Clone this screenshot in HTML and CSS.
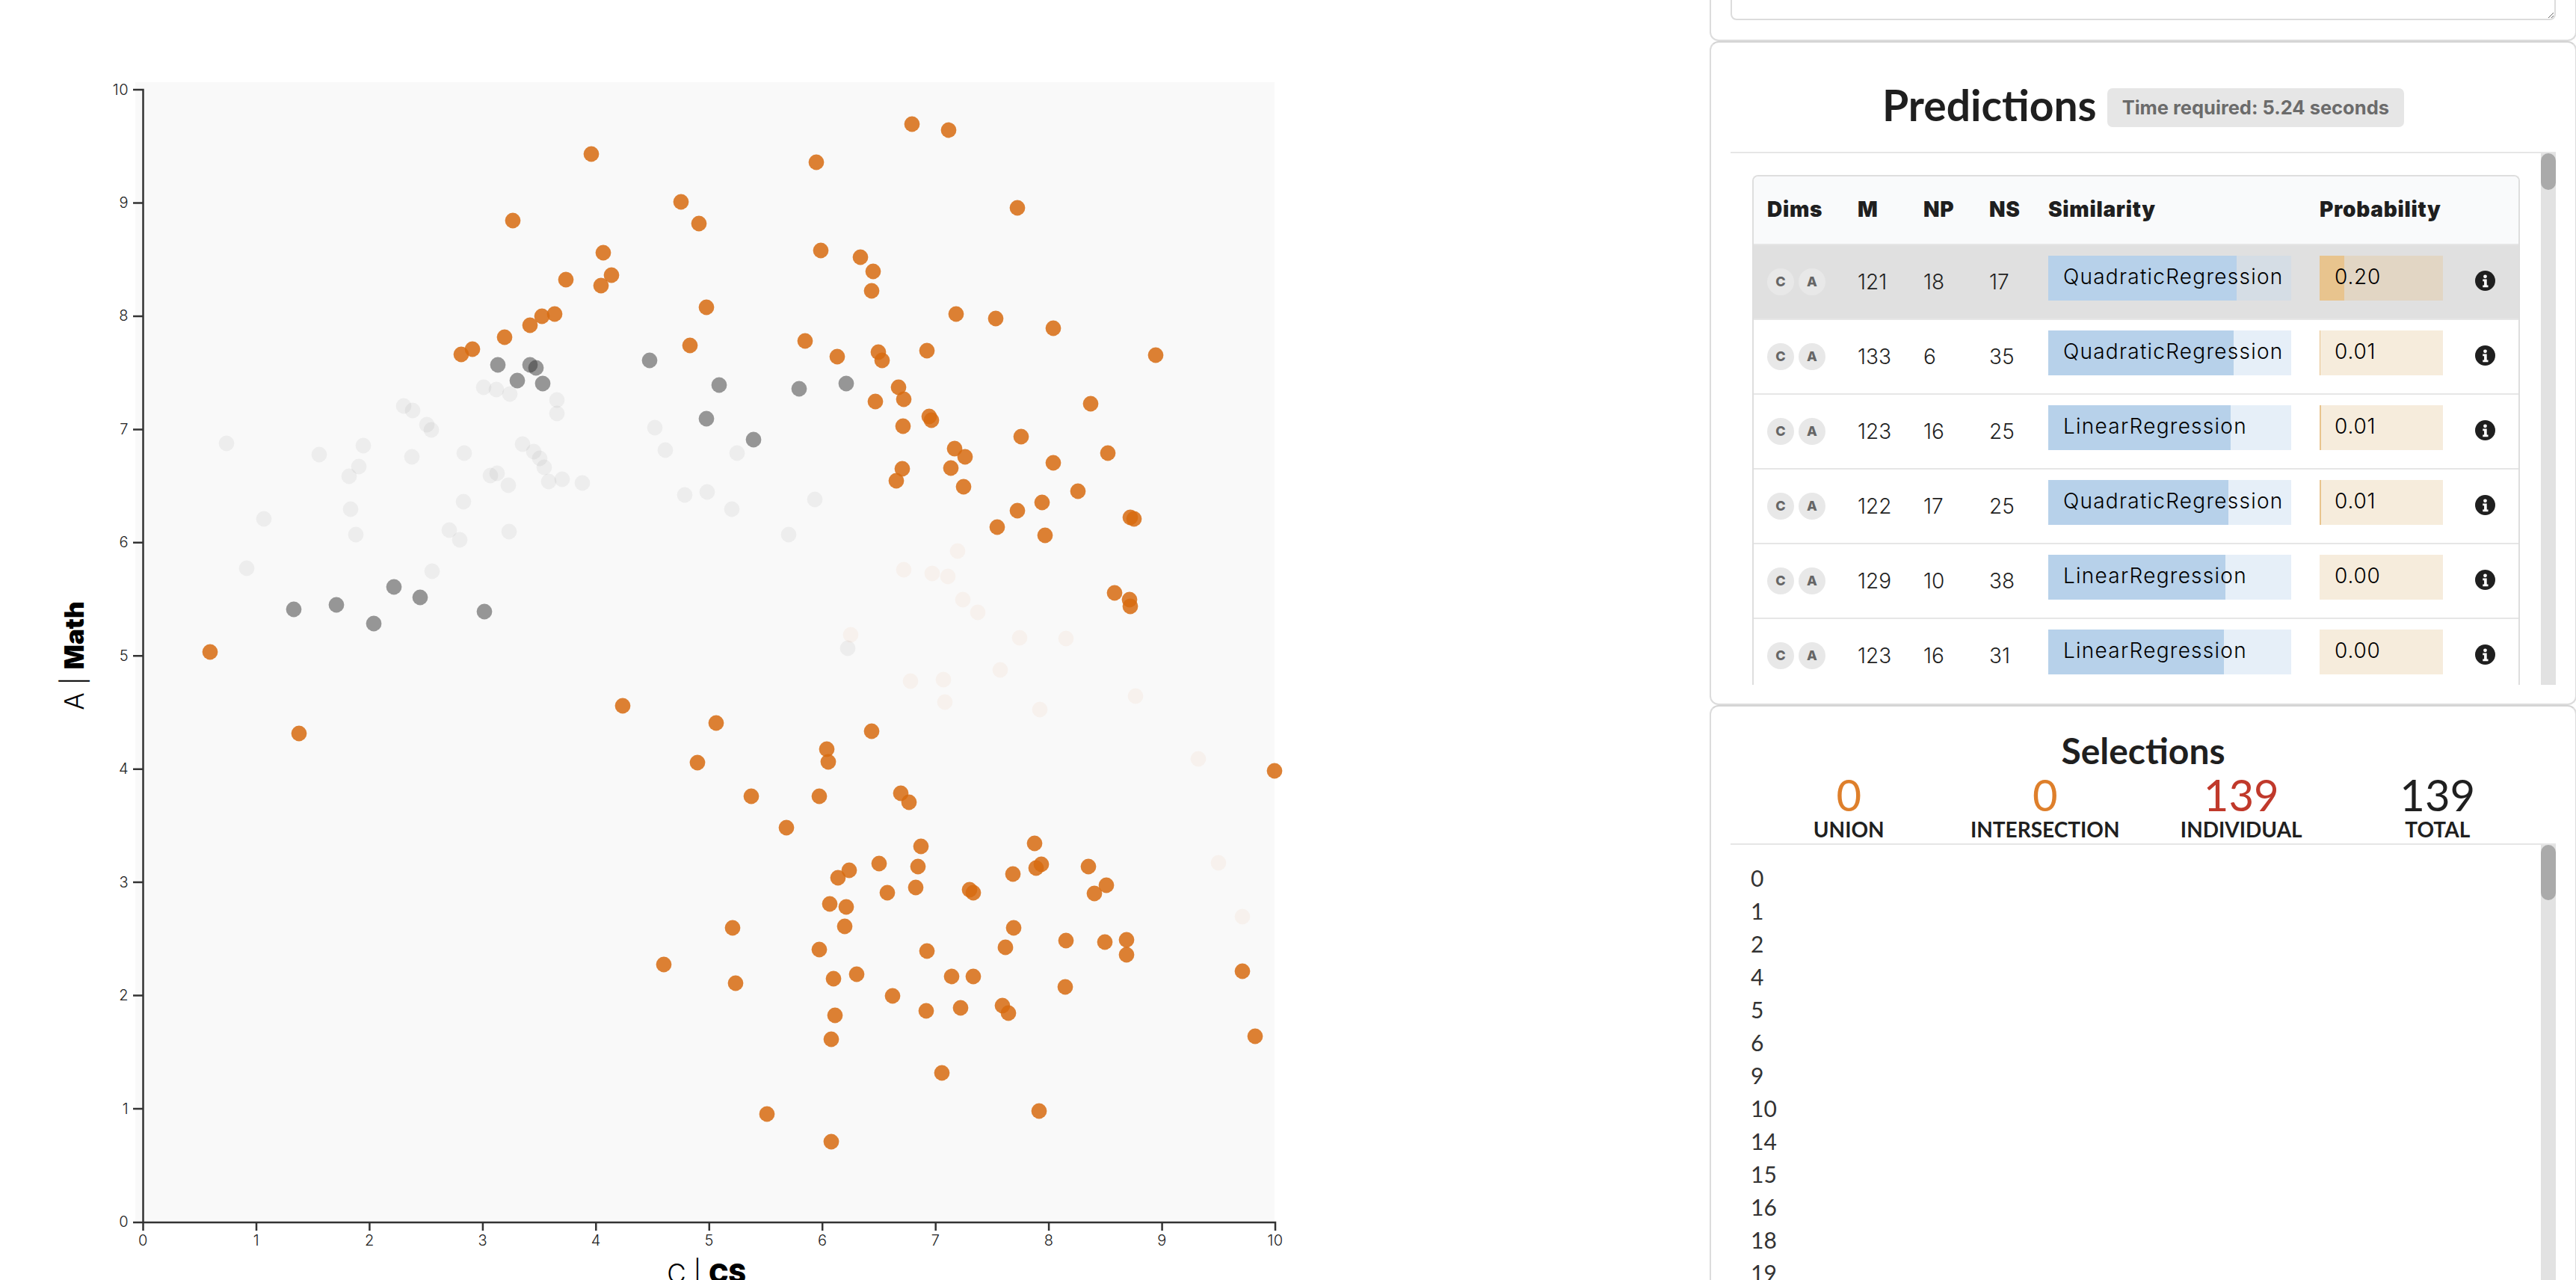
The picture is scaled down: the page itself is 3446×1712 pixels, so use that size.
FILE: index.html
```html
<html>
  <head>
    <link rel="stylesheet" href="styles.css">
  </head>
  <body>
    <svg width="0" height="0" class="defs">
      <symbol id="info" viewBox="0 0 27 27">
        <circle cx="13.5" cy="13.5" r="13.5" fill="#1f1f1f"></circle>
        <circle cx="13.5" cy="7.8" r="2.4" fill="#fff"></circle>
        <path d="M10.3 11.6h5.4v8h1.8v2.6h-7.2v-2.6h1.8v-5.4h-1.8z" fill="#fff"></path>
      </symbol>
    </svg>

    <div class="app">
      <div class="chart">
        <svg class="plot" width="2287" height="1712">
          <rect class="plot-bg" x="181" y="110" width="1524" height="1525"></rect>

          <!-- not in the selection -->
          <g class="dots dots-faint">
            <circle cx="303" cy="593"></circle><circle cx="427" cy="608"></circle><circle cx="486" cy="596"></circle>
            <circle cx="480" cy="624"></circle><circle cx="467" cy="637"></circle><circle cx="469" cy="681"></circle>
            <circle cx="476" cy="715"></circle><circle cx="353" cy="694"></circle><circle cx="330" cy="760"></circle>
            <circle cx="540" cy="543"></circle><circle cx="552" cy="549"></circle><circle cx="571" cy="568"></circle>
            <circle cx="577" cy="575"></circle><circle cx="551" cy="611"></circle><circle cx="621" cy="606"></circle>
            <circle cx="647" cy="518"></circle><circle cx="664" cy="521"></circle><circle cx="682" cy="527"></circle>
            <circle cx="745" cy="535"></circle><circle cx="745" cy="553"></circle><circle cx="699" cy="594"></circle>
            <circle cx="714" cy="604"></circle><circle cx="722" cy="613"></circle><circle cx="728" cy="625"></circle>
            <circle cx="734" cy="644"></circle><circle cx="752" cy="641"></circle><circle cx="779" cy="646"></circle>
            <circle cx="656" cy="636"></circle><circle cx="665" cy="633"></circle><circle cx="680" cy="649"></circle>
            <circle cx="620" cy="671"></circle><circle cx="601" cy="709"></circle><circle cx="615" cy="722"></circle>
            <circle cx="681" cy="711"></circle><circle cx="578" cy="764"></circle><circle cx="876" cy="572"></circle>
            <circle cx="890" cy="602"></circle><circle cx="916" cy="662"></circle><circle cx="946" cy="658"></circle>
            <circle cx="986" cy="606"></circle><circle cx="979" cy="681"></circle><circle cx="1090" cy="668"></circle>
            <circle cx="1055" cy="715"></circle><circle cx="1134" cy="867"></circle>
          </g>
          <g class="dots dots-tint">
            <circle cx="1281" cy="737"></circle><circle cx="1209" cy="762"></circle><circle cx="1247" cy="767"></circle>
            <circle cx="1268" cy="771"></circle><circle cx="1288" cy="802"></circle><circle cx="1308" cy="819"></circle>
            <circle cx="1138" cy="849"></circle><circle cx="1364" cy="853"></circle><circle cx="1426" cy="854"></circle>
            <circle cx="1218" cy="911"></circle><circle cx="1262" cy="909"></circle><circle cx="1264" cy="939"></circle>
            <circle cx="1338" cy="896"></circle><circle cx="1391" cy="949"></circle><circle cx="1519" cy="931"></circle>
            <circle cx="1603" cy="1015"></circle><circle cx="1630" cy="1154"></circle><circle cx="1662" cy="1226"></circle>
          </g>
          <g class="dots dots-gray">
            <circle cx="666" cy="488"></circle><circle cx="709" cy="488"></circle><circle cx="717" cy="492"></circle>
            <circle cx="692" cy="509"></circle><circle cx="726" cy="513"></circle><circle cx="869" cy="482"></circle>
            <circle cx="962" cy="515"></circle><circle cx="945" cy="560"></circle><circle cx="393" cy="815"></circle>
            <circle cx="450" cy="809"></circle><circle cx="527" cy="785"></circle><circle cx="562" cy="799"></circle>
            <circle cx="500" cy="834"></circle><circle cx="648" cy="818"></circle><circle cx="1069" cy="520"></circle>
            <circle cx="1132" cy="513"></circle><circle cx="1008" cy="588"></circle>
          </g>
          <g class="dots dots-orange">
            <circle cx="791" cy="206"></circle><circle cx="686" cy="295"></circle><circle cx="807" cy="338"></circle>
            <circle cx="818" cy="368"></circle><circle cx="804" cy="382"></circle><circle cx="757" cy="374"></circle>
            <circle cx="742" cy="420"></circle><circle cx="725" cy="423"></circle><circle cx="709" cy="435"></circle>
            <circle cx="675" cy="451"></circle><circle cx="632" cy="467"></circle><circle cx="617" cy="474"></circle>
            <circle cx="911" cy="270"></circle><circle cx="935" cy="299"></circle><circle cx="945" cy="411"></circle>
            <circle cx="923" cy="462"></circle><circle cx="1220" cy="166"></circle><circle cx="1269" cy="174"></circle>
            <circle cx="1092" cy="217"></circle><circle cx="1361" cy="278"></circle><circle cx="1098" cy="335"></circle>
            <circle cx="1151" cy="344"></circle><circle cx="1168" cy="363"></circle><circle cx="1166" cy="389"></circle>
            <circle cx="1279" cy="420"></circle><circle cx="1332" cy="426"></circle><circle cx="1409" cy="439"></circle>
            <circle cx="1077" cy="456"></circle><circle cx="1120" cy="477"></circle><circle cx="1175" cy="471"></circle>
            <circle cx="1180" cy="482"></circle><circle cx="1240" cy="469"></circle><circle cx="1546" cy="475"></circle>
            <circle cx="1202" cy="518"></circle><circle cx="1209" cy="534"></circle><circle cx="1171" cy="537"></circle>
            <circle cx="1459" cy="540"></circle><circle cx="1243" cy="557"></circle><circle cx="1246" cy="562"></circle>
            <circle cx="1208" cy="570"></circle><circle cx="1366" cy="584"></circle><circle cx="1277" cy="600"></circle>
            <circle cx="1291" cy="611"></circle><circle cx="1272" cy="626"></circle><circle cx="1207" cy="627"></circle>
            <circle cx="1199" cy="643"></circle><circle cx="1289" cy="651"></circle><circle cx="1409" cy="619"></circle>
            <circle cx="1482" cy="606"></circle><circle cx="1442" cy="657"></circle><circle cx="1394" cy="672"></circle>
            <circle cx="1361" cy="683"></circle><circle cx="1334" cy="705"></circle><circle cx="1398" cy="716"></circle>
            <circle cx="1512" cy="692"></circle><circle cx="1517" cy="694"></circle><circle cx="1491" cy="793"></circle>
            <circle cx="1511" cy="802"></circle><circle cx="1512" cy="811"></circle><circle cx="281" cy="872"></circle>
            <circle cx="400" cy="981"></circle><circle cx="833" cy="944"></circle><circle cx="933" cy="1020"></circle>
            <circle cx="888" cy="1290"></circle><circle cx="958" cy="967"></circle><circle cx="1166" cy="978"></circle>
            <circle cx="1106" cy="1002"></circle><circle cx="1108" cy="1019"></circle><circle cx="1005" cy="1065"></circle>
            <circle cx="1096" cy="1065"></circle><circle cx="1205" cy="1061"></circle><circle cx="1216" cy="1073"></circle>
            <circle cx="1052" cy="1107"></circle><circle cx="1232" cy="1132"></circle><circle cx="1384" cy="1128"></circle>
            <circle cx="1176" cy="1155"></circle><circle cx="1228" cy="1159"></circle><circle cx="1136" cy="1164"></circle>
            <circle cx="1121" cy="1174"></circle><circle cx="1393" cy="1156"></circle><circle cx="1386" cy="1161"></circle>
            <circle cx="1355" cy="1169"></circle><circle cx="1456" cy="1159"></circle><circle cx="1480" cy="1184"></circle>
            <circle cx="1464" cy="1195"></circle><circle cx="1225" cy="1187"></circle><circle cx="1187" cy="1194"></circle>
            <circle cx="1297" cy="1190"></circle><circle cx="1302" cy="1194"></circle><circle cx="1110" cy="1209"></circle>
            <circle cx="1132" cy="1213"></circle><circle cx="1130" cy="1239"></circle><circle cx="980" cy="1241"></circle>
            <circle cx="1356" cy="1241"></circle><circle cx="1096" cy="1270"></circle><circle cx="1240" cy="1272"></circle>
            <circle cx="1345" cy="1267"></circle><circle cx="1426" cy="1258"></circle><circle cx="1478" cy="1260"></circle>
            <circle cx="1507" cy="1257"></circle><circle cx="1507" cy="1277"></circle><circle cx="1146" cy="1303"></circle>
            <circle cx="1115" cy="1309"></circle><circle cx="984" cy="1315"></circle><circle cx="1273" cy="1306"></circle>
            <circle cx="1302" cy="1306"></circle><circle cx="1425" cy="1320"></circle><circle cx="1662" cy="1299"></circle>
            <circle cx="1194" cy="1332"></circle><circle cx="1239" cy="1352"></circle><circle cx="1285" cy="1348"></circle>
            <circle cx="1341" cy="1345"></circle><circle cx="1349" cy="1355"></circle><circle cx="1117" cy="1358"></circle>
            <circle cx="1112" cy="1390"></circle><circle cx="1679" cy="1386"></circle><circle cx="1260" cy="1435"></circle>
            <circle cx="1026" cy="1490"></circle><circle cx="1390" cy="1486"></circle><circle cx="1112" cy="1527"></circle>
            <circle cx="1705" cy="1031"></circle>
          </g>

          <!-- axes -->
          <path class="axis" d="M178 120H191.5V1635M178 1635H1706V1646M191.5 1635V1646"></path>
          <path class="tick" d="M178 1483h13M178 1331.6h13M178 1180.1h13M178 1028.7h13M178 877.3h13M178 725.8h13M178 574.4h13M178 422.9h13M178 271.4h13"></path>
          <path class="tick" d="M343 1635v11M494.4 1635v11M645.9 1635v11M797.3 1635v11M948.8 1635v11M1100.2 1635v11M1251.7 1635v11M1403.1 1635v11M1554.6 1635v11"></path>

          <g class="tick-labels tick-labels-y">
            <text x="172" y="1641">0</text><text x="172" y="1490">1</text><text x="172" y="1338">2</text>
            <text x="172" y="1187">3</text><text x="172" y="1035">4</text><text x="172" y="884">5</text>
            <text x="172" y="732">6</text><text x="172" y="581">7</text><text x="172" y="429">8</text>
            <text x="172" y="278">9</text><text x="172" y="127">10</text>
          </g>
          <g class="tick-labels tick-labels-x">
            <text x="191.5" y="1666">0</text><text x="343" y="1666">1</text><text x="494.4" y="1666">2</text>
            <text x="645.9" y="1666">3</text><text x="797.3" y="1666">4</text><text x="948.8" y="1666">5</text>
            <text x="1100.2" y="1666">6</text><text x="1251.7" y="1666">7</text><text x="1403.1" y="1666">8</text>
            <text x="1554.6" y="1666">9</text><text x="1706" y="1666">10</text>
          </g>

          <text class="axis-title" x="945" y="1716">C | <tspan class="axis-name">CS</tspan></text>
          <text class="axis-title" transform="translate(112 877) rotate(-90)">A | <tspan class="axis-name">Math</tspan></text>
        </svg>
      </div>

      <div class="side">
        <div class="card card-top">
          <textarea class="notes"></textarea>
        </div>

        <div class="card card-predictions">
          <div class="predictions-head">
            <h2 class="predictions-title">Predictions</h2>
            <span class="badge">Time required: 5.24 seconds</span>
          </div>
          <div class="scroll scroll-predictions">
            <div class="pred-table">
              <div class="pred-row pred-head">
                <div>Dims</div><div>M</div><div>NP</div><div>NS</div><div>Similarity</div><div>Probability</div><div></div>
              </div>

              <div class="pred-row pred-selected">
                <div class="dims"><span class="dim">C</span><span class="dim">A</span></div>
                <div>121</div><div>18</div><div>17</div>
                <div><div class="bar bar-sim"><div class="bar-fill" style="width: 252px"></div><span class="bar-text">QuadraticRegression</span></div></div>
                <div><div class="bar bar-prob"><div class="bar-fill" style="width: 33px"></div><span class="bar-text">0.20</span></div></div>
                <div class="info"><svg width="27" height="27"><use href="#info"></use></svg></div>
              </div>

              <div class="pred-row">
                <div class="dims"><span class="dim">C</span><span class="dim">A</span></div>
                <div>133</div><div>6</div><div>35</div>
                <div><div class="bar bar-sim"><div class="bar-fill" style="width: 248px"></div><span class="bar-text">QuadraticRegression</span></div></div>
                <div><div class="bar bar-prob"><div class="bar-fill" style="width: 1px"></div><span class="bar-text">0.01</span></div></div>
                <div class="info"><svg width="27" height="27"><use href="#info"></use></svg></div>
              </div>

              <div class="pred-row">
                <div class="dims"><span class="dim">C</span><span class="dim">A</span></div>
                <div>123</div><div>16</div><div>25</div>
                <div><div class="bar bar-sim"><div class="bar-fill" style="width: 244px"></div><span class="bar-text">LinearRegression</span></div></div>
                <div><div class="bar bar-prob"><div class="bar-fill" style="width: 2px"></div><span class="bar-text">0.01</span></div></div>
                <div class="info"><svg width="27" height="27"><use href="#info"></use></svg></div>
              </div>

              <div class="pred-row">
                <div class="dims"><span class="dim">C</span><span class="dim">A</span></div>
                <div>122</div><div>17</div><div>25</div>
                <div><div class="bar bar-sim"><div class="bar-fill" style="width: 241px"></div><span class="bar-text">QuadraticRegression</span></div></div>
                <div><div class="bar bar-prob"><div class="bar-fill" style="width: 2px"></div><span class="bar-text">0.01</span></div></div>
                <div class="info"><svg width="27" height="27"><use href="#info"></use></svg></div>
              </div>

              <div class="pred-row">
                <div class="dims"><span class="dim">C</span><span class="dim">A</span></div>
                <div>129</div><div>10</div><div>38</div>
                <div><div class="bar bar-sim"><div class="bar-fill" style="width: 237px"></div><span class="bar-text">LinearRegression</span></div></div>
                <div><div class="bar bar-prob"><span class="bar-text">0.00</span></div></div>
                <div class="info"><svg width="27" height="27"><use href="#info"></use></svg></div>
              </div>

              <div class="pred-row">
                <div class="dims"><span class="dim">C</span><span class="dim">A</span></div>
                <div>123</div><div>16</div><div>31</div>
                <div><div class="bar bar-sim"><div class="bar-fill" style="width: 235px"></div><span class="bar-text">LinearRegression</span></div></div>
                <div><div class="bar bar-prob"><span class="bar-text">0.00</span></div></div>
                <div class="info"><svg width="27" height="27"><use href="#info"></use></svg></div>
              </div>
            </div>
            <div class="scrollbar"><div class="thumb thumb-predictions"></div></div>
          </div>
        </div>

        <div class="card card-selections">
          <h2 class="selections-title">Selections</h2>
          <div class="stats">
            <div class="stat"><div class="stat-num stat-orange">0</div><div class="stat-label">UNION</div></div>
            <div class="stat"><div class="stat-num stat-orange">0</div><div class="stat-label">INTERSECTION</div></div>
            <div class="stat"><div class="stat-num stat-red">139</div><div class="stat-label">INDIVIDUAL</div></div>
            <div class="stat"><div class="stat-num">139</div><div class="stat-label">TOTAL</div></div>
          </div>
          <div class="scroll scroll-selections">
            <ul class="id-list">
              <li>0</li><li>1</li><li>2</li><li>4</li><li>5</li><li>6</li><li>9</li>
              <li>10</li><li>14</li><li>15</li><li>16</li><li>18</li><li>19</li>
            </ul>
            <div class="scrollbar"><div class="thumb thumb-selections"></div></div>
          </div>
        </div>
      </div>
    </div>
  </body>
</html>
```

FILE: styles.css
```css
html,
body {
  margin: 0;
  height: 100%;
  overflow: hidden;
  background-color: #fff;
}
body {
  font-family: "Lato", sans-serif;
  color: #1f1f1f;
}
.defs {
  display: block;
  height: 0;
}
.app {
  display: flex;
  width: 3447px;
  height: 1712px;
  overflow: hidden;
}
.chart {
  width: 2287px;
  flex-shrink: 0;
}
.plot {
  display: block;
}
.plot-bg {
  fill: #f9f9f9;
}
.dots circle {
  r: 10.4px;
}
.dots-faint circle {
  fill: #333;
  opacity: 0.06;
}
.dots-tint circle {
  fill: #d76b10;
  opacity: 0.05;
}
.dots-gray circle {
  fill: #333;
  opacity: 0.5;
}
.dots-orange circle {
  fill: #d76b10;
  opacity: 0.85;
}
.axis,
.tick {
  fill: none;
  stroke: #333;
  stroke-width: 2.5;
}
.tick-labels text {
  font-family: "Inter", sans-serif;
  font-size: 20px;
  font-weight: 300;
  letter-spacing: 0.5px;
  fill: #222;
}
.tick-labels-y text {
  text-anchor: end;
}
.tick-labels-x text {
  text-anchor: middle;
}
.axis-title {
  font-family: "Inter", sans-serif;
  font-size: 35px;
  font-weight: 300;
  fill: #000;
  text-anchor: middle;
}
.axis-name {
  font-weight: 900;
}
.side {
  width: 1160px;
  flex-shrink: 0;
  display: flex;
  flex-direction: column;
}
.card {
  box-sizing: border-box;
  border: 2px solid #dcdcdc;
  border-radius: 12px;
  background-color: #fff;
  flex-shrink: 0;
}
.card-top {
  height: 55px;
  padding: 0 26px;
  border-top: none;
  border-top-left-radius: 0;
  border-top-right-radius: 0;
  overflow: hidden;
}
.notes {
  display: block;
  box-sizing: border-box;
  width: 100%;
  height: 67px;
  margin-top: -40px;
  border: 2px solid #dcdcdc;
  border-radius: 8px;
  outline: none;
}
.card-predictions {
  height: 888px;
  padding: 0 26px;
  border-top-color: #d4d4d4;
}
.predictions-head {
  box-sizing: border-box;
  height: 148px;
  padding-top: 20px;
  display: flex;
  align-items: center;
  justify-content: center;
  gap: 14px;
  border-bottom: 2px solid #e6e6e6;
}
.predictions-title {
  margin: 0;
  font-size: 57px;
  font-weight: 700;
}
.badge {
  box-sizing: border-box;
  height: 52px;
  line-height: 52px;
  margin-top: 8px;
  padding: 0 20px;
  background-color: #e6e6e6;
  border-radius: 7px;
  font-family: "Inter", sans-serif;
  font-size: 25.5px;
  font-weight: 700;
  color: #6b6b6b;
}
.scroll {
  position: relative;
  overflow: hidden;
}
.scroll-predictions {
  box-sizing: border-box;
  height: 711px;
  padding: 29px 48px 0 29px;
}
.pred-table {
  border: 2px solid #dedede;
  border-bottom: none;
  border-radius: 8px 8px 0 0;
  font-family: "Inter", sans-serif;
  font-size: 28px;
  font-weight: 300;
}
.pred-row {
  display: grid;
  grid-template-columns: 121px 88px 88px 79px 363px 201px 82px;
  align-items: center;
  box-sizing: border-box;
  height: 100px;
  border-top: 2px solid #e6e6e6;
}
.pred-row > div {
  padding-left: 18px;
  box-sizing: border-box;
}
.pred-head {
  height: 90px;
  border-top: none;
  background-color: #f9fafb;
  border-radius: 6px 6px 0 0;
  font-weight: 900;
  letter-spacing: 0.7px;
  padding-bottom: 2px;
}
.pred-selected {
  background-color: #e0e0e0;
}
.dims {
  display: flex;
  gap: 6px;
}
.dim {
  width: 36px;
  height: 36px;
  flex-shrink: 0;
  border-radius: 50%;
  background-color: #e8e8e8;
  color: #666;
  font-size: 18px;
  font-weight: 800;
  line-height: 36px;
  text-align: center;
}
.bar {
  position: relative;
  height: 60px;
  top: -5px;
  line-height: 56px;
}
.bar-sim {
  width: 325px;
  background-color: #e6eff8;
}
.bar-sim .bar-fill {
  background-color: #b7d1ea;
}
.bar-sim .bar-text {
  letter-spacing: 1.25px;
}
.bar-prob {
  width: 165px;
  background-color: #f6ecdc;
}
.bar-prob .bar-fill {
  background-color: #e8c48e;
}
.bar-prob .bar-text {
  letter-spacing: 0.8px;
}
.pred-selected .bar-sim {
  background-color: #d5dde5;
}
.pred-selected .bar-prob {
  background-color: #e2d6c4;
}
.bar-fill {
  position: absolute;
  left: 0;
  top: 0;
  bottom: 0;
}
.bar-text {
  position: relative;
  padding-left: 20px;
  color: #000;
}
.info {
  display: flex;
  padding-left: 25px !important;
  position: relative;
  top: -2px;
}
.scrollbar {
  position: absolute;
  right: 0;
  top: 0;
  bottom: 0;
  width: 20px;
  background-color: #e2e2e2;
}
.thumb {
  background-color: #aaa;
  border-radius: 10px;
}
.thumb-predictions {
  height: 49px;
}
.thumb-selections {
  height: 74px;
}
.card-selections {
  height: 800px;
  padding: 0 26px;
  border-top-color: #d4d4d4;
}
.selections-title {
  margin: 30px 0 0;
  font-size: 48px;
  line-height: 58px;
  font-weight: 700;
  text-align: center;
}
.stats {
  display: grid;
  grid-template-columns: repeat(4, 262.5px);
  padding: 0 0 3px 27px;
  border-bottom: 2px solid #e6e6e6;
  text-align: center;
}
.stat-num {
  font-size: 58px;
  line-height: 60px;
  font-weight: 400;
}
.stat-orange {
  color: #de7f2b;
}
.stat-red {
  color: #c0392b;
}
.stat-label {
  font-size: 28px;
  line-height: 32px;
  font-weight: 700;
}
.scroll-selections {
  height: 600px;
}
.id-list {
  list-style: none;
  margin: 0;
  padding: 22px 0 0 27px;
  font-size: 30px;
  line-height: 44px;
  font-weight: 400;
  color: #333;
}
```
